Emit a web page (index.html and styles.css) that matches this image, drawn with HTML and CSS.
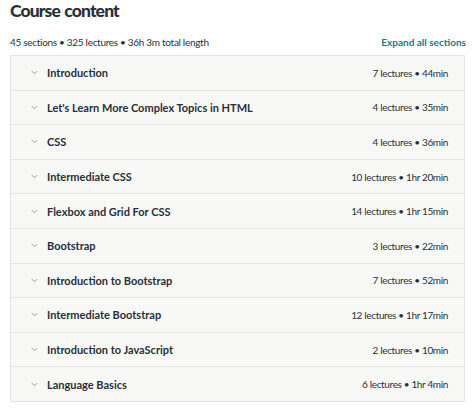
FILE: index.html
```html
<!DOCTYPE html>
<html>
<head>
<meta charset="utf-8">
<link rel="stylesheet" href="styles.css">
</head>
<body>
<div class="page">
  <h2 class="title">Course content</h2>
  <div class="meta">
    <span class="stats">45 sections • 325 lectures • 36h 3m total length</span>
    <span class="expand">Expand all sections</span>
  </div>
  <div class="sections">
    <div class="row"><span class="chev"><svg viewBox="0 0 8 5" width="7" height="5"><path d="M0.8 0.8 L4 4 L7.2 0.8" fill="none" stroke="#8a9299" stroke-width="1"/></svg></span><span class="name">Introduction</span><span class="info">7 lectures • 44min</span></div>
    <div class="row"><span class="chev"><svg viewBox="0 0 8 5" width="7" height="5"><path d="M0.8 0.8 L4 4 L7.2 0.8" fill="none" stroke="#8a9299" stroke-width="1"/></svg></span><span class="name">Let's Learn More Complex Topics in HTML</span><span class="info">4 lectures • 35min</span></div>
    <div class="row"><span class="chev"><svg viewBox="0 0 8 5" width="7" height="5"><path d="M0.8 0.8 L4 4 L7.2 0.8" fill="none" stroke="#8a9299" stroke-width="1"/></svg></span><span class="name">CSS</span><span class="info">4 lectures • 36min</span></div>
    <div class="row"><span class="chev"><svg viewBox="0 0 8 5" width="7" height="5"><path d="M0.8 0.8 L4 4 L7.2 0.8" fill="none" stroke="#8a9299" stroke-width="1"/></svg></span><span class="name">Intermediate CSS</span><span class="info">10 lectures • 1hr 20min</span></div>
    <div class="row"><span class="chev"><svg viewBox="0 0 8 5" width="7" height="5"><path d="M0.8 0.8 L4 4 L7.2 0.8" fill="none" stroke="#8a9299" stroke-width="1"/></svg></span><span class="name">Flexbox and Grid For CSS</span><span class="info">14 lectures • 1hr 15min</span></div>
    <div class="row"><span class="chev"><svg viewBox="0 0 8 5" width="7" height="5"><path d="M0.8 0.8 L4 4 L7.2 0.8" fill="none" stroke="#8a9299" stroke-width="1"/></svg></span><span class="name">Bootstrap</span><span class="info">3 lectures • 22min</span></div>
    <div class="row"><span class="chev"><svg viewBox="0 0 8 5" width="7" height="5"><path d="M0.8 0.8 L4 4 L7.2 0.8" fill="none" stroke="#8a9299" stroke-width="1"/></svg></span><span class="name">Introduction to Bootstrap</span><span class="info">7 lectures • 52min</span></div>
    <div class="row"><span class="chev"><svg viewBox="0 0 8 5" width="7" height="5"><path d="M0.8 0.8 L4 4 L7.2 0.8" fill="none" stroke="#8a9299" stroke-width="1"/></svg></span><span class="name">Intermediate Bootstrap</span><span class="info">12 lectures • 1hr 17min</span></div>
    <div class="row"><span class="chev"><svg viewBox="0 0 8 5" width="7" height="5"><path d="M0.8 0.8 L4 4 L7.2 0.8" fill="none" stroke="#8a9299" stroke-width="1"/></svg></span><span class="name">Introduction to JavaScript</span><span class="info">2 lectures • 10min</span></div>
    <div class="row"><span class="chev"><svg viewBox="0 0 8 5" width="7" height="5"><path d="M0.8 0.8 L4 4 L7.2 0.8" fill="none" stroke="#8a9299" stroke-width="1"/></svg></span><span class="name">Language Basics</span><span class="info">6 lectures • 1hr 4min</span></div>
  </div>
</div>
</body>
</html>
```
FILE: styles.css
```css
* { box-sizing: border-box; }
body {
  margin: 0;
  background: #ffffff;
  font-family: Lato, sans-serif;
  color: #29303b;
}
.page {
  padding: 0 10px;
  width: 474px;
}
.title {
  margin: 0;
  padding-top: 0;
  font-size: 17.5px;
  line-height: 21px;
  font-weight: 900;
  letter-spacing: -0.85px;
  word-spacing: 1px;
}
.meta {
  display: flex;
  justify-content: space-between;
  align-items: center;
  margin-top: 14px;
  height: 14px;
  font-size: 10px;
}
.stats {
  letter-spacing: -0.3px;
}
.expand {
  color: #0f7c90;
  font-weight: 700;
  margin-right: -2px;
}
.sections {
  margin-top: 6px;
  width: 455px;
  border: 1px solid #e4e4e4;
  border-bottom: none;
}
.row {
  display: flex;
  align-items: center;
  height: 34.6px;
  background: #f8f8f7;
  border-bottom: 1px solid #e4e4e4;
  padding: 0 16px 0 20px;
  font-size: 11px;
}
.chev {
  width: 16px;
  display: flex;
  align-items: center;
}
.name {
  flex: 1;
  font-weight: 700;
}
.info {
  font-size: 10px;
  letter-spacing: -0.35px;
}
```
